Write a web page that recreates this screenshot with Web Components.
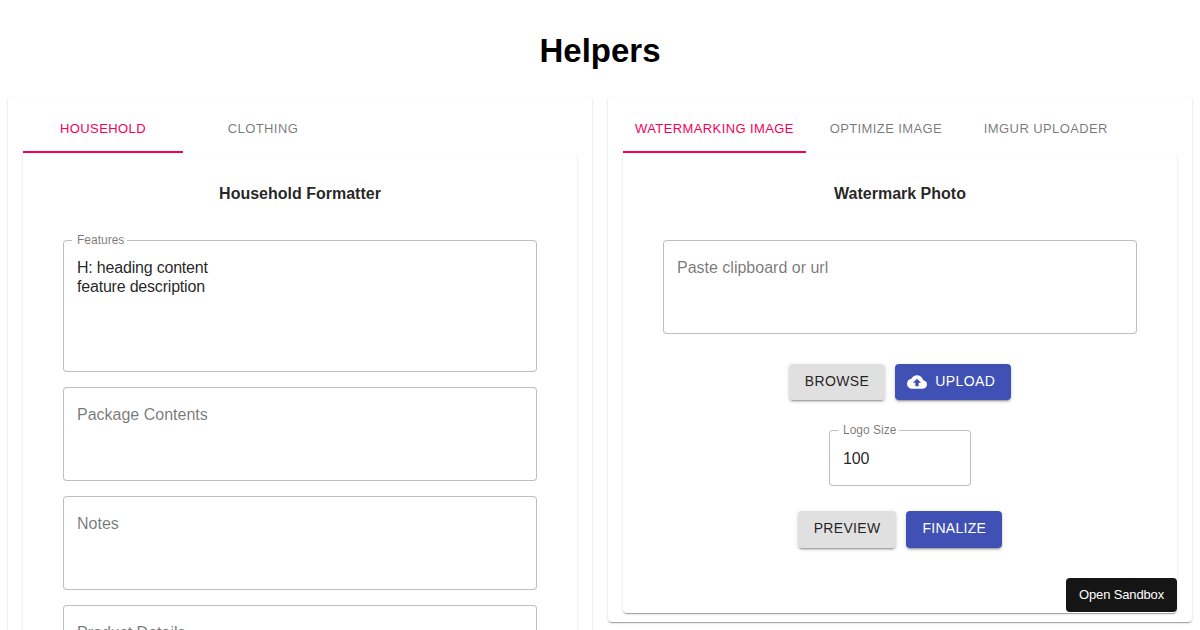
<!DOCTYPE html>
<html lang="en">
  <head>
    <meta charset="UTF-8" />
    <title>Helpers</title>
    <style>
      html, body { height: 100%; overflow: hidden; }
      body {
        margin: 0;
        background: #fff;
        color: rgba(0, 0, 0, 0.87);
        font-family: "Liberation Sans", Arial, sans-serif;
      }
    </style>
  </head>
  <body>
    <helpers-page>
      <helper-card>
        <tab-bar slot="tabs">
          <tab-item active>Household</tab-item>
          <tab-item>Clothing</tab-item>
        </tab-bar>
        <form-panel heading="Household Formatter">
          <outlined-field label="Features" rows="5">H: heading content
feature description</outlined-field>
          <outlined-field placeholder="Package Contents" rows="3"></outlined-field>
          <outlined-field placeholder="Notes" rows="3"></outlined-field>
          <outlined-field placeholder="Product Details" rows="3"></outlined-field>
        </form-panel>
      </helper-card>

      <helper-card>
        <tab-bar slot="tabs">
          <tab-item active>Watermarking Image</tab-item>
          <tab-item>Optimize Image</tab-item>
          <tab-item>Imgur Uploader</tab-item>
        </tab-bar>
        <form-panel heading="Watermark Photo">
          <outlined-field placeholder="Paste clipboard or url" rows="3"></outlined-field>
          <button-row>
            <action-button>Browse</action-button>
            <action-button primary>
              <svg slot="icon" viewBox="0 0 24 24" width="20" height="20" fill="currentColor"><path d="M19.35 10.04C18.67 6.59 15.64 4 12 4 9.11 4 6.6 5.64 5.35 8.04 2.34 8.36 0 10.91 0 14c0 3.31 2.69 6 6 6h13c2.76 0 5-2.24 5-5 0-2.64-2.05-4.78-4.65-4.96zM14 13v4h-4v-4H7l5-5 5 5h-3z"></path></svg>
              Upload
            </action-button>
          </button-row>
          <button-row>
            <outlined-field small label="Logo Size" rows="1">100</outlined-field>
          </button-row>
          <button-row tight>
            <action-button>Preview</action-button>
            <action-button primary>Finalize</action-button>
          </button-row>
        </form-panel>
      </helper-card>
    </helpers-page>
    <sandbox-badge>Open Sandbox</sandbox-badge>

    <script>
      // small helper so each class only has to give its markup
      function shadow(el, html) {
        el.attachShadow({ mode: 'open' }).innerHTML = html;
        return el.shadowRoot;
      }

      class HelpersPage extends HTMLElement {
        constructor() {
          super();
          shadow(this, `
            <style>
              :host { display: block; }
              h1 {
                margin: 0;
                height: 97px;
                box-sizing: border-box;
                padding-top: 32px;
                text-align: center;
                font: bold 33px/38px "Liberation Sans", Arial, sans-serif;
                color: #000;
              }
              .cols {
                display: grid;
                grid-template-columns: 584px 584px;
                gap: 16px;
                padding: 0 8px;
                align-items: start;
              }
            </style>
            <h1>Helpers</h1>
            <div class="cols"><slot></slot></div>
          `);
        }
      }

      class HelperCard extends HTMLElement {
        constructor() {
          super();
          shadow(this, `
            <style>
              :host {
                display: block;
                box-sizing: border-box;
                padding: 8px 15px 9px;
                background: #fff;
                border-radius: 4px;
                box-shadow: 0 2px 1px -1px rgba(0,0,0,.2), 0 1px 1px 0 rgba(0,0,0,.14), 0 1px 3px 0 rgba(0,0,0,.12);
              }
            </style>
            <slot name="tabs"></slot>
            <slot></slot>
          `);
        }
      }

      class TabBar extends HTMLElement {
        constructor() {
          super();
          shadow(this, `
            <style>:host { display: flex; height: 48px; }</style>
            <slot></slot>
          `);
        }
      }

      class TabItem extends HTMLElement {
        constructor() {
          super();
          shadow(this, `
            <style>
              :host {
                display: flex;
                align-items: center;
                justify-content: center;
                box-sizing: border-box;
                min-width: 160px;
                padding: 6px 12px 8px;
                font: 400 13px/21px "Liberation Sans", Arial, sans-serif;
                letter-spacing: 0.4px;
                text-transform: uppercase;
                color: rgba(0, 0, 0, 0.54);
              }
              :host([active]) {
                color: #f50057;
                border-bottom: 2px solid #f50057;
                padding-bottom: 6px;
              }
            </style>
            <slot></slot>
          `);
        }
      }

      class FormPanel extends HTMLElement {
        constructor() {
          super();
          shadow(this, `
            <style>
              :host {
                display: block;
                box-sizing: border-box;
                padding: 31px 40px 65px;
                background: #fff;
                border-radius: 4px;
                box-shadow: 0 2px 1px -1px rgba(0,0,0,.2), 0 1px 1px 0 rgba(0,0,0,.14), 0 1px 3px 0 rgba(0,0,0,.12);
              }
              h2 {
                margin: 0 0 36px;
                text-align: center;
                font: bold 16px/20px "Liberation Sans", Arial, sans-serif;
                color: rgba(0, 0, 0, 0.87);
              }
              .stack { display: flex; flex-direction: column; gap: 15px; }
            </style>
            <h2></h2>
            <div class="stack"><slot></slot></div>
          `);
          this.shadowRoot.querySelector('h2').textContent = this.getAttribute('heading');
        }
      }

      class OutlinedField extends HTMLElement {
        constructor() {
          super();
          const root = shadow(this, `
            <style>
              :host {
                display: block;
                position: relative;
                box-sizing: border-box;
                border: 1px solid rgba(0, 0, 0, 0.25);
                border-radius: 4px;
                padding: 16.5px 13px 18.5px;
                font: 400 16px/19px "Liberation Sans", Arial, sans-serif;
                color: rgba(0, 0, 0, 0.87);
                background: #fff;
              }
              :host([small]) { width: 142px; padding: 17.5px 13px; }
              .label {
                position: absolute;
                top: -8px;
                left: 8px;
                padding: 0 3px 0 5px;
                background: #fff;
                font: 400 12px/14px "Liberation Sans", Arial, sans-serif;
                color: rgba(0, 0, 0, 0.54);
              }
              .value { white-space: pre-line; letter-spacing: -0.2px; }
              .hint { color: rgba(0, 0, 0, 0.54); white-space: nowrap; letter-spacing: 0; }
            </style>
            <span class="label"></span>
            <div class="value"><span class="hint"></span><slot></slot></div>
          `);
          const label = this.getAttribute('label');
          const hint = this.getAttribute('placeholder');
          if (label) root.querySelector('.label').textContent = label;
          else root.querySelector('.label').remove();
          if (hint) root.querySelector('.hint').textContent = hint;
          else root.querySelector('.hint').remove();
          root.querySelector('.value').style.minHeight = (this.getAttribute('rows') * 19) + 'px';
        }
      }

      class ButtonRow extends HTMLElement {
        constructor() {
          super();
          shadow(this, `
            <style>
              :host {
                display: flex;
                justify-content: center;
                gap: 10px;
                margin-top: 15px;
              }
              :host([tight]) { margin-top: 10px; --button-spacing: 0.3px; }
            </style>
            <slot></slot>
          `);
        }
      }

      class ActionButton extends HTMLElement {
        constructor() {
          super();
          shadow(this, `
            <style>
              :host {
                display: inline-flex;
                align-items: center;
                box-sizing: border-box;
                height: 36.4px;
                padding: 5px 16px 7px;
                border-radius: 4px;
                background: #e0e0e0;
                color: rgba(0, 0, 0, 0.87);
                font: 400 14px/21px "Liberation Sans", Arial, sans-serif;
                letter-spacing: var(--button-spacing, 0.4px);
                text-transform: uppercase;
                box-shadow: 0 3px 1px -2px rgba(0,0,0,.2), 0 2px 2px 0 rgba(0,0,0,.14), 0 1px 5px 0 rgba(0,0,0,.12);
              }
              :host([primary]) { background: #3f51b5; color: #fff; }
              ::slotted(svg) { margin: 2px 8px 0 -4px; }
            </style>
            <slot name="icon"></slot>
            <slot></slot>
          `);
        }
      }

      class SandboxBadge extends HTMLElement {
        constructor() {
          super();
          shadow(this, `
            <style>
              :host {
                position: fixed;
                right: 23px;
                bottom: 18px;
                display: flex;
                align-items: center;
                box-sizing: border-box;
                height: 34px;
                padding: 0 13px;
                border-radius: 4px;
                background: #151515;
                color: #fff;
                font: 400 13px/16px "Liberation Sans", Arial, sans-serif;
                letter-spacing: -0.15px;
              }
            </style>
            <slot></slot>
          `);
        }
      }

      customElements.define('helpers-page', HelpersPage);
      customElements.define('helper-card', HelperCard);
      customElements.define('tab-bar', TabBar);
      customElements.define('tab-item', TabItem);
      customElements.define('form-panel', FormPanel);
      customElements.define('outlined-field', OutlinedField);
      customElements.define('button-row', ButtonRow);
      customElements.define('action-button', ActionButton);
      customElements.define('sandbox-badge', SandboxBadge);
    </script>
  </body>
</html>
